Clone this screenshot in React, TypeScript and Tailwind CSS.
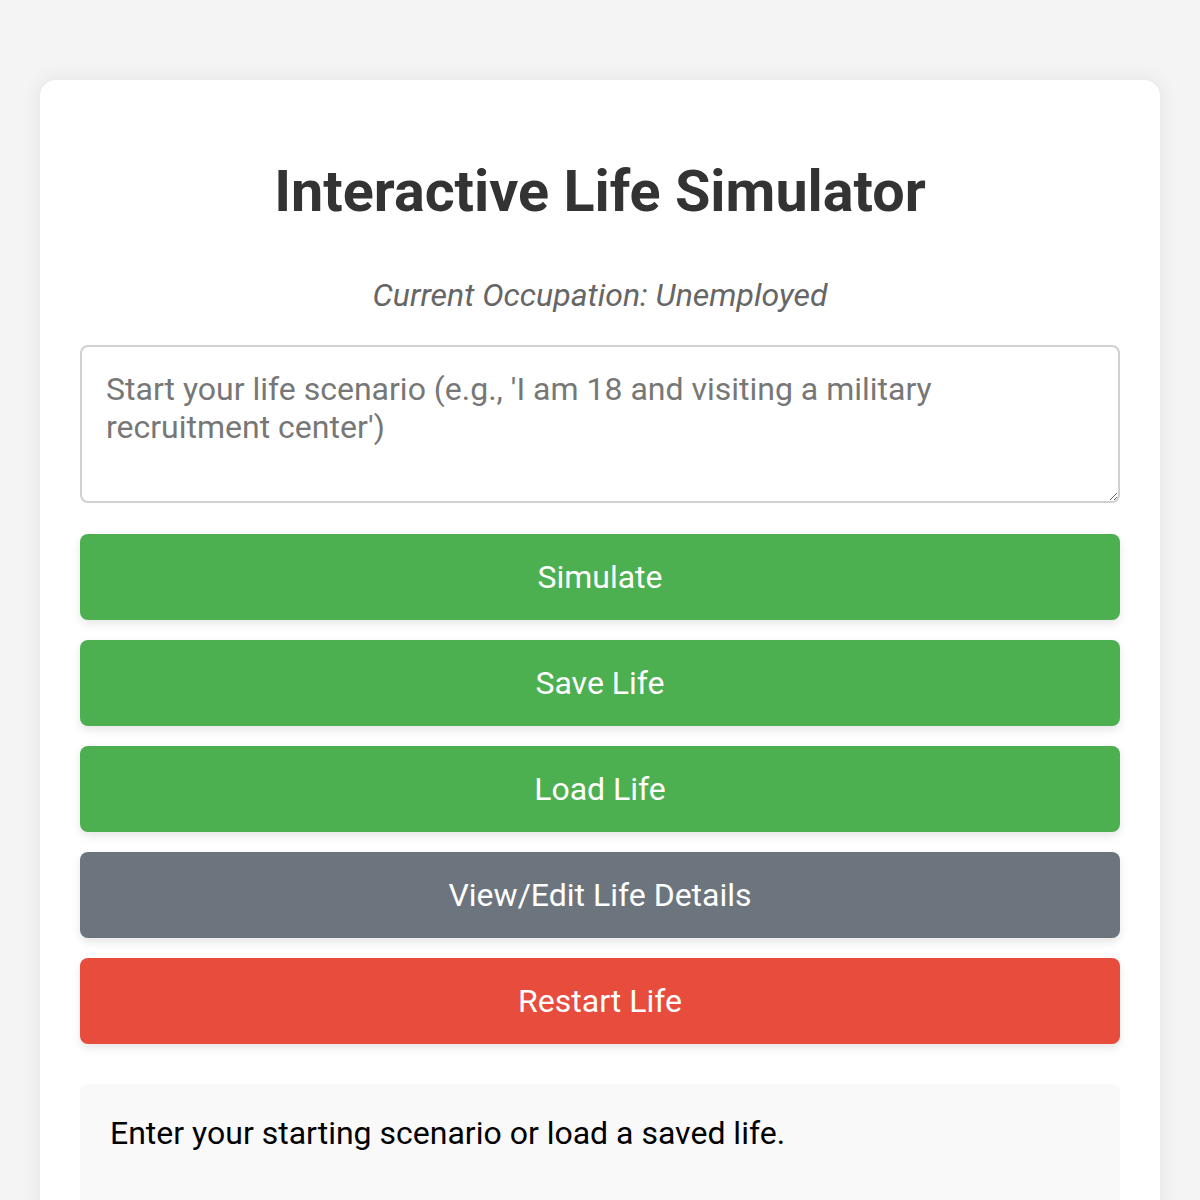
const buttons = [
  { label: 'Simulate', cls: 'bg-[#4caf50]' },
  { label: 'Save Life', cls: 'bg-[#4caf50]' },
  { label: 'Load Life', cls: 'bg-[#4caf50]' },
  { label: 'View/Edit Life Details', cls: 'bg-[#6c757d]' },
  { label: 'Restart Life', cls: 'bg-[#e74c3c]' },
];

export default function App() {
  return (
    <div className="min-h-[1200px] bg-[#f4f4f4] px-10 pt-20 font-['Roboto',sans-serif]">
      <div className="rounded-2xl bg-white px-10 pt-10 pb-10 shadow-[0_0_20px_rgba(0,0,0,0.08)]">
        {/* Header */}
        <h1 className="pt-[38px] text-center text-[57.5px] font-bold leading-[68px] text-[#333]">
          Interactive Life Simulator
        </h1>
        <p className="mt-[51px] text-center text-[32px] italic leading-[36px] text-[#666]">
          Current Occupation: Unemployed
        </p>

        {/* Scenario input */}
        <textarea
          className="mt-[32px] block h-[158px] w-full rounded-lg border-2 border-[#d0d0d0] bg-white px-6 pt-[23px] pb-[25px] text-[32px] leading-[38px] text-[#333] placeholder:text-[#777] focus:outline-none"
          placeholder="Start your life scenario (e.g., 'I am 18 and visiting a military recruitment center')"
        />

        {/* Actions */}
        <div className="mt-[31px] flex flex-col gap-5">
          {buttons.map((b) => (
            <button
              key={b.label}
              className={`h-[86px] w-full rounded-lg text-[32px] text-white shadow-[0_4px_10px_rgba(0,0,0,0.1)] ${b.cls}`}
            >
              {b.label}
            </button>
          ))}
        </div>

        {/* Output */}
        <div className="mt-10 min-h-[200px] rounded-lg bg-[#f9f9f9] p-[30px]">
          <p className="text-[32px] leading-[38px] text-black">
            Enter your starting scenario or load a saved life.
          </p>
        </div>
      </div>
    </div>
  );
}
